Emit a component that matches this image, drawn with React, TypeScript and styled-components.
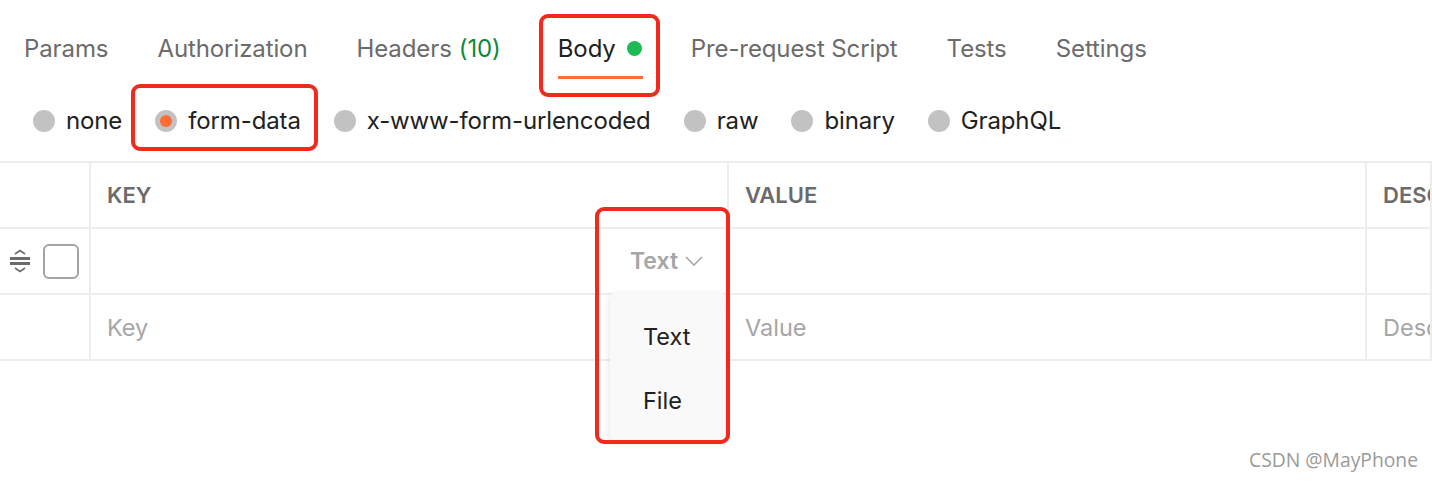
import React from "react";
import styled, { createGlobalStyle } from "styled-components";

const Global = createGlobalStyle`
  html, body { margin: 0; padding: 0; background: #fff; }
  body { font-family: Inter, "Noto Sans", sans-serif; -webkit-font-smoothing: antialiased; }
  * { box-sizing: border-box; }
`;

const Page = styled.div`
  position: relative;
  width: 1432px;
  height: 482px;
  overflow: hidden;
  background: #fff;
`;

const TabBar = styled.div`
  display: flex;
  gap: 49px;
  padding: 16px 24px 0;
  height: 80px;
`;

const Tab = styled.div<{ $active?: boolean }>`
  position: relative;
  height: 64px;
  display: flex;
  align-items: center;
  font-size: 24px;
  letter-spacing: -0.1px;
  color: ${(p) => (p.$active ? "#212121" : "#6b6b6b")};
  white-space: nowrap;
  &::after {
    content: "";
    display: ${(p) => (p.$active ? "block" : "none")};
    position: absolute;
    left: 0;
    right: -1px;
    bottom: 1px;
    height: 3px;
    background: #ff6c37;
  }
`;

const Count = styled.span`
  color: #0b8a3b;
  margin-left: 7px;
  margin-right: 8px;
`;

const Dot = styled.span`
  width: 15px;
  height: 15px;
  border-radius: 50%;
  background: #1ebb55;
  margin-left: 11px;
`;

const RadioRow = styled.div`
  display: flex;
  align-items: center;
  gap: 33px;
  padding: 0 33px;
  height: 81px;
`;

const RadioItem = styled.label`
  display: flex;
  align-items: center;
  gap: 11px;
  font-size: 24px;
  letter-spacing: -0.13px;
  color: #212121;
`;

const RadioCircle = styled.span<{ $checked?: boolean }>`
  width: 22px;
  height: 22px;
  border-radius: 50%;
  background: #c2c2c2;
  display: flex;
  align-items: center;
  justify-content: center;
  &::after {
    content: "";
    display: ${(p) => (p.$checked ? "block" : "none")};
    width: 12px;
    height: 12px;
    border-radius: 50%;
    background: #ff6c37;
  }
`;

const Table = styled.div`
  display: grid;
  grid-template-columns: 91px 638px 638px 1fr;
  border-top: 2px solid #ededed;
`;

const Cell = styled.div<{ $header?: boolean }>`
  position: relative;
  height: 66px;
  min-width: 0;
  border-right: 2px solid #ededed;
  border-bottom: 2px solid #ededed;
  display: flex;
  align-items: center;
  padding: 0 16px;
  font-size: ${(p) => (p.$header ? "22px" : "23.5px")};
  white-space: nowrap;
  overflow: visible;
  font-weight: ${(p) => (p.$header ? 600 : 400)};
  color: ${(p) => (p.$header ? "#6b6b6b" : "#a6a6a6")};
`;

const ClipCell = styled(Cell)`
  overflow: hidden;
`;

const HandleCell = styled(Cell)`
  padding: 0 0 0 9px;
  gap: 12px;
`;

const Checkbox = styled.span`
  width: 36px;
  height: 35px;
  border: 2px solid #a3a3a3;
  border-radius: 6px;
  margin-top: 1px;
`;

const KeyCell = styled(Cell)`
  justify-content: flex-end;
  padding-right: 24px;
`;

const TypeSelect = styled.div`
  display: flex;
  align-items: center;
  gap: 7px;
  font-size: 23px;
  font-weight: 600;
  color: #a6a6a6;
`;

const Menu = styled.div`
  position: absolute;
  z-index: 2;
  top: 64px;
  right: 2px;
  width: 115px;
  height: 147px;
  background: #f9f9f9;
  border-radius: 4px;
  box-shadow: 0 2px 8px rgba(0, 0, 0, 0.12);
  display: flex;
  flex-direction: column;
  padding: 11px 0 0 33px;
`;

const MenuItem = styled.div`
  height: 64px;
  display: flex;
  align-items: center;
  font-size: 23.5px;
  font-weight: 400;
  color: #212121;
`;

const Annotation = styled.div<{ $x: number; $y: number; $w: number; $h: number }>`
  position: absolute;
  z-index: 5;
  left: ${(p) => p.$x}px;
  top: ${(p) => p.$y}px;
  width: ${(p) => p.$w}px;
  height: ${(p) => p.$h}px;
  border: 4px solid #f5281e;
  border-radius: 9px;
  pointer-events: none;
`;

const Watermark = styled.div`
  position: absolute;
  right: 14px;
  bottom: 9px;
  font-family: "Open Sans", "Noto Sans", sans-serif;
  font-size: 19.3px;
  color: #9a9a9a;
`;

const Grip = () => (
  <svg width="22" height="24" viewBox="0 0 22 24" fill="none">
    <path d="M6 5 L11 1.5 L16 5" stroke="#6b6b6b" strokeWidth="1.6" />
    <rect x="1" y="8" width="20" height="3" fill="#6b6b6b" />
    <rect x="1" y="13" width="20" height="3" fill="#6b6b6b" />
    <path d="M6 19 L11 22.5 L16 19" stroke="#6b6b6b" strokeWidth="1.6" />
  </svg>
);

const Chevron = () => (
  <svg width="18" height="10" viewBox="0 0 18 10" fill="none">
    <path d="M1 1 L9 9 L17 1" stroke="#a6a6a6" strokeWidth="1.6" />
  </svg>
);

const tabs = ["Params", "Authorization", "Headers", "Body", "Pre-request Script", "Tests", "Settings"];
const modes = ["none", "form-data", "x-www-form-urlencoded", "raw", "binary", "GraphQL"];

export default function App() {
  return (
    <Page>
      <Global />
      <TabBar>
        {tabs.map((t) => (
          <Tab key={t} $active={t === "Body"}>
            {t}
            {t === "Headers" && <Count>(10)</Count>}
            {t === "Body" && <Dot />}
          </Tab>
        ))}
      </TabBar>
      <RadioRow>
        {modes.map((m) => (
          <RadioItem key={m}>
            <RadioCircle $checked={m === "form-data"} />
            {m}
          </RadioItem>
        ))}
      </RadioRow>
      <Table>
        <Cell $header />
        <Cell $header>KEY</Cell>
        <Cell $header>VALUE</Cell>
        <ClipCell $header>DESCRIPTION</ClipCell>

        <HandleCell>
          <Grip />
          <Checkbox />
        </HandleCell>
        <KeyCell>
          <TypeSelect>
            Text
            <Chevron />
          </TypeSelect>
          <Menu>
            <MenuItem>Text</MenuItem>
            <MenuItem>File</MenuItem>
          </Menu>
        </KeyCell>
        <Cell />
        <ClipCell />

        <Cell />
        <Cell>Key</Cell>
        <Cell>Value</Cell>
        <ClipCell>Description</ClipCell>
      </Table>
      <Annotation $x={539} $y={14} $w={121} $h={83} />
      <Annotation $x={131} $y={84} $w={187} $h={67} />
      <Annotation $x={595} $y={207} $w={135} $h={237} />
      <Watermark>CSDN @MayPhone</Watermark>
    </Page>
  );
}
